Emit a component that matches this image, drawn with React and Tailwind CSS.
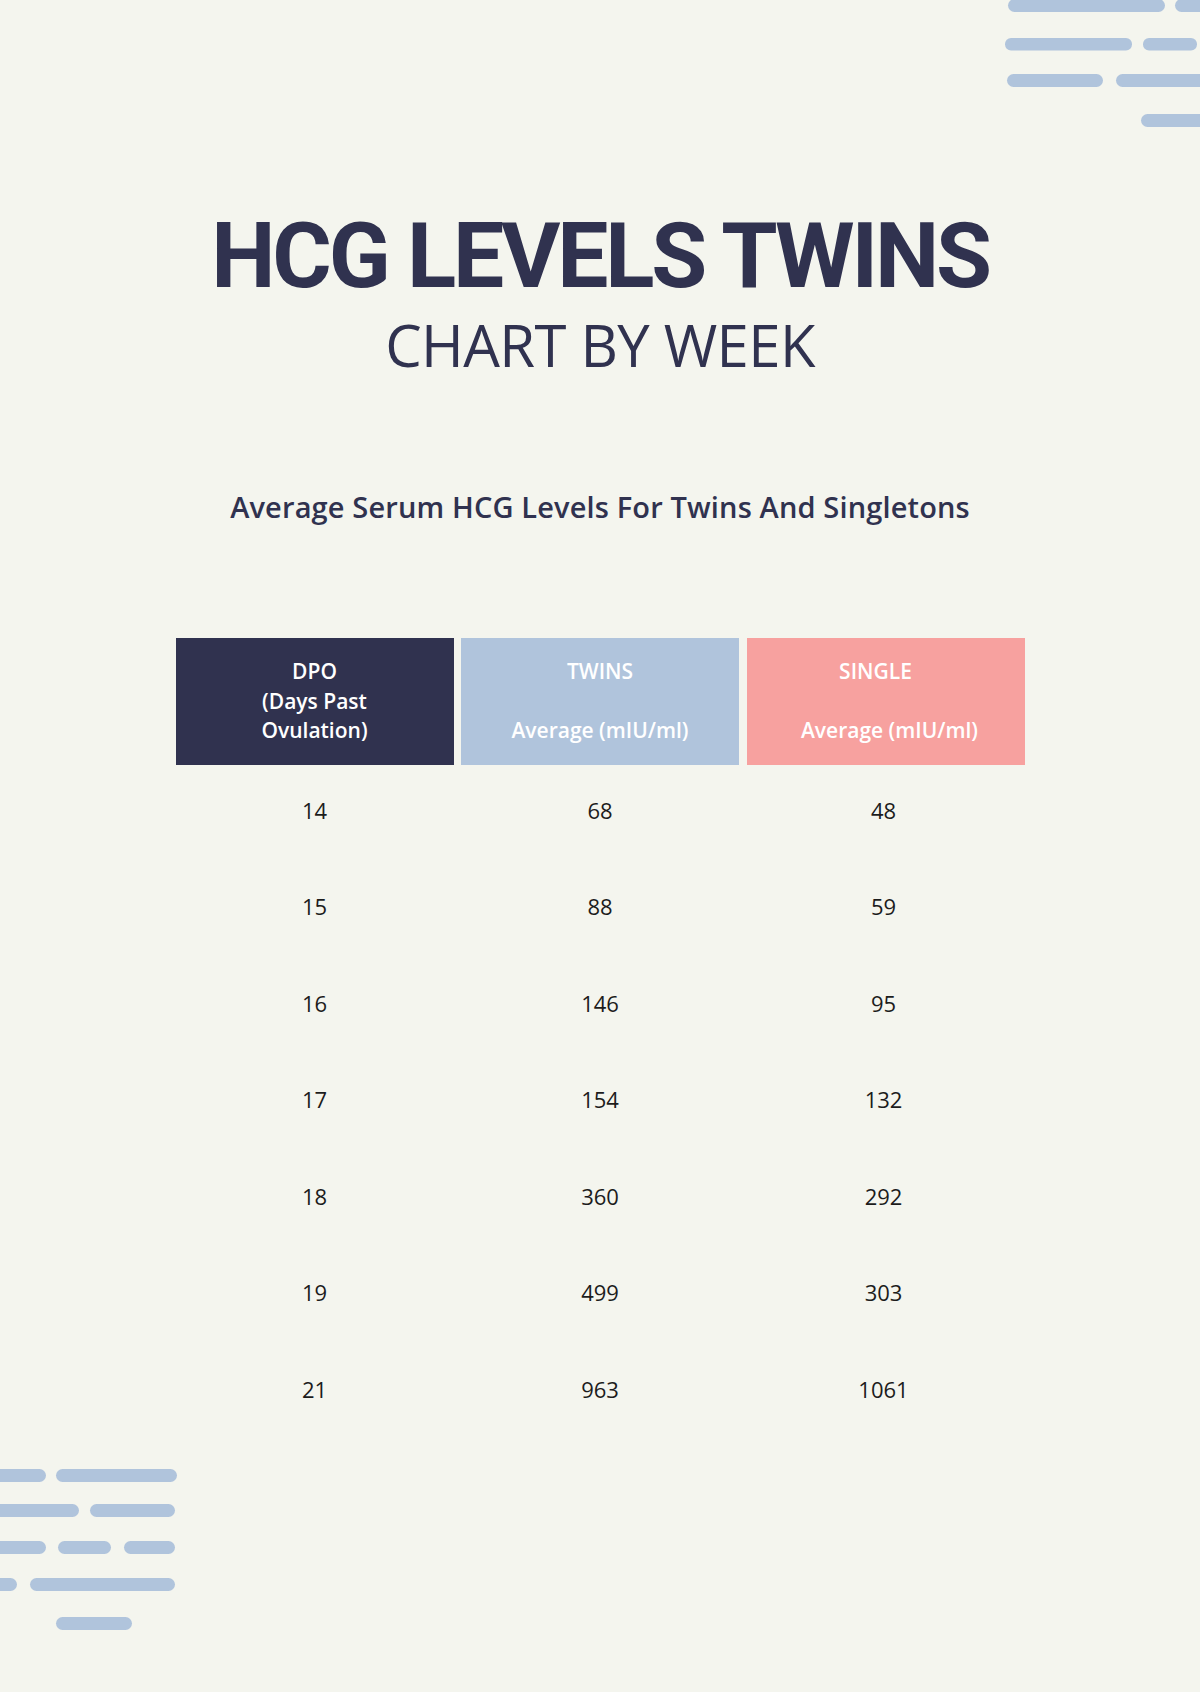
import React from 'react'

const rows = [
  ['14', '68', '48'],
  ['15', '88', '59'],
  ['16', '146', '95'],
  ['17', '154', '132'],
  ['18', '360', '292'],
  ['19', '499', '303'],
  ['21', '963', '1061'],
]

function TopDashes() {
  return (
    <svg className="absolute top-0 right-0" width="200" height="130" viewBox="1000 0 200 130">
      <g fill="#b0c4dc">
        <rect x="1008" y="-1" width="157" height="13" rx="6.5" />
        <rect x="1175" y="-1" width="60" height="13" rx="6.5" />
        <rect x="1005" y="38" width="127" height="12.5" rx="6" />
        <rect x="1143" y="38" width="54" height="12.5" rx="6" />
        <rect x="1007" y="74" width="96" height="13" rx="6.5" />
        <rect x="1116" y="74" width="110" height="13" rx="6.5" />
        <rect x="1141" y="114" width="90" height="13" rx="6.5" />
      </g>
    </svg>
  )
}

function BottomDashes() {
  return (
    <svg className="absolute left-0 top-[1460px]" width="190" height="180" viewBox="0 1460 190 180">
      <g fill="#b0c4dc">
        <rect x="-30" y="1469" width="76" height="13" rx="6.5" />
        <rect x="56" y="1469" width="121" height="13" rx="6.5" />
        <rect x="-30" y="1504" width="109" height="13" rx="6.5" />
        <rect x="90" y="1504" width="85" height="13" rx="6.5" />
        <rect x="-30" y="1541" width="76" height="13" rx="6.5" />
        <rect x="58" y="1541" width="53" height="13" rx="6.5" />
        <rect x="124" y="1541" width="51" height="13" rx="6.5" />
        <rect x="-30" y="1578" width="47" height="13" rx="6.5" />
        <rect x="30" y="1578" width="145" height="13" rx="6.5" />
        <rect x="56" y="1617" width="76" height="13" rx="6.5" />
      </g>
    </svg>
  )
}

export default function App() {
  return (
    <div className="relative w-[1200px] min-h-[1692px] overflow-hidden bg-[#f4f5ee] text-[#30324f] font-['Open_Sans',sans-serif]">
      <TopDashes />
      <BottomDashes />

      <div className="flex flex-col items-center pt-[211px]">
        <h1 className="font-['Roboto',sans-serif] font-bold text-[91px] leading-none tracking-[-0.035em]">
          HCG LEVELS TWINS
        </h1>
        <h2 className="mt-[14px] text-[58px] leading-none font-normal tracking-[-0.01em]">
          CHART BY WEEK
        </h2>
        <p className="mt-[118px] text-[29px] leading-none font-semibold tracking-[0.005em]">
          Average Serum HCG Levels For Twins And Singletons
        </p>

        <div className="mt-[117px] grid grid-cols-[278px_278px_278px] gap-x-[7.5px]">
          <div className="h-[127px] bg-[#30324f] text-white flex flex-col items-center justify-center text-[21px] leading-[29.5px] font-semibold">
            <span>DPO</span>
            <span>(Days Past</span>
            <span>Ovulation)</span>
          </div>
          <div className="h-[127px] bg-[#b0c4dc] text-white flex flex-col items-center justify-center text-[21px] leading-[29.5px] font-semibold">
            <span>TWINS</span>
            <span className="h-[29.5px]"></span>
            <span>Average (mIU/ml)</span>
          </div>
          <div className="h-[127px] bg-[#f7a19f] text-white flex flex-col items-center justify-center text-[21px] leading-[29.5px] font-semibold">
            <span className="pr-5">SINGLE</span>
            <span className="h-[29.5px]"></span>
            <span className="pl-2">Average (mIU/ml)</span>
          </div>

          <div className="col-span-3 -mt-[3px] flex flex-col">
            {rows.map((r) => (
              <div key={r[0]} className="grid grid-cols-[278px_278px_278px] gap-x-[7.5px] h-[96.5px] items-center text-[22px] text-[#1c1c1c]">
                <span className="text-center">{r[0]}</span>
                <span className="text-center">{r[1]}</span>
                <span className="text-center pr-1">{r[2]}</span>
              </div>
            ))}
          </div>
        </div>
      </div>
    </div>
  )
}
